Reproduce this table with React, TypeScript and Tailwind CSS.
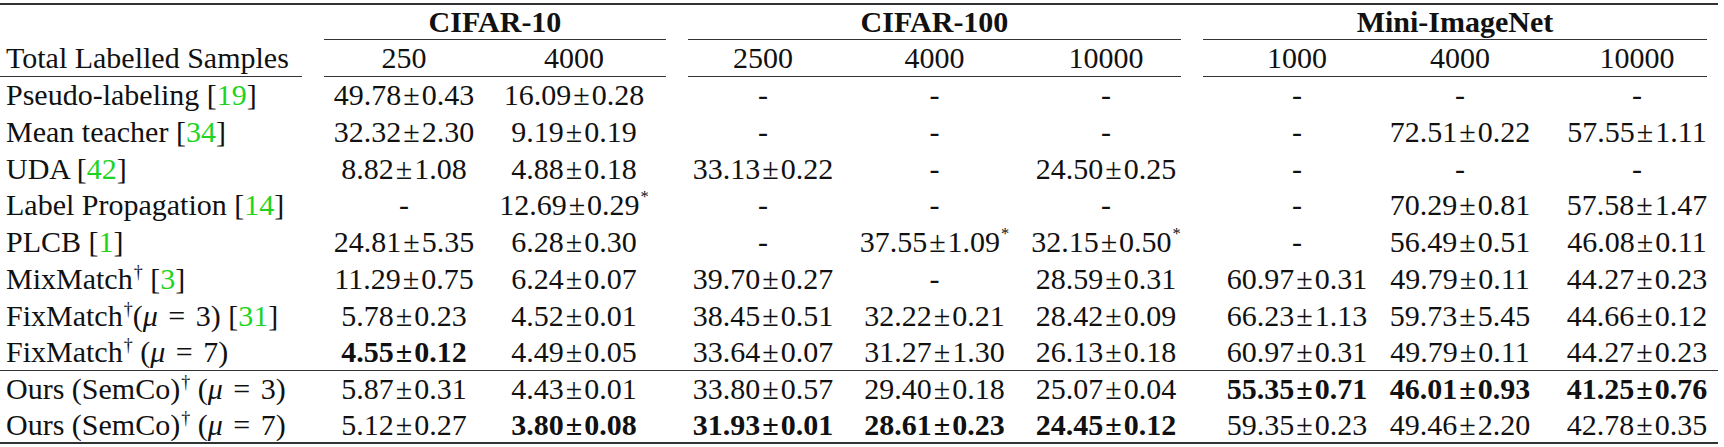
import type { ReactNode } from "react";

type Val = { v: string; b?: boolean; star?: boolean } | "-";

const cols = "grid grid-cols-[313px_182px_182px_172px_171px_172px_186px_164px_176px]";

function Ref({ n }: { n: string }) {
  return (
    <>
      {" "}[<span className="text-[#1ed41e]">{n}</span>]
    </>
  );
}

function Dag() {
  return <sup className="text-[0.6em] top-[-0.6em] ml-[1px]">†</sup>;
}

function Mu({ k }: { k: string }) {
  return (
    <>
      (<i>μ</i>
      <span className="inline-block w-[22px] text-center mx-[8px]">=</span>
      {k})
    </>
  );
}

const n = (v: string, extra?: { b?: boolean; star?: boolean }): Val => ({ v, ...extra });

const rows: { label: ReactNode; vals: Val[] }[] = [
  {
    label: <>Pseudo-labeling<Ref n="19" /></>,
    vals: [n("49.78±0.43"), n("16.09±0.28"), "-", "-", "-", "-", "-", "-"],
  },
  {
    label: <>Mean teacher<Ref n="34" /></>,
    vals: [n("32.32±2.30"), n("9.19±0.19"), "-", "-", "-", "-", n("72.51±0.22"), n("57.55±1.11")],
  },
  {
    label: <>UDA<Ref n="42" /></>,
    vals: [n("8.82±1.08"), n("4.88±0.18"), n("33.13±0.22"), "-", n("24.50±0.25"), "-", "-", "-"],
  },
  {
    label: <>Label Propagation<Ref n="14" /></>,
    vals: ["-", n("12.69±0.29", { star: true }), "-", "-", "-", "-", n("70.29±0.81"), n("57.58±1.47")],
  },
  {
    label: <>PLCB<Ref n="1" /></>,
    vals: [
      n("24.81±5.35"),
      n("6.28±0.30"),
      "-",
      n("37.55±1.09", { star: true }),
      n("32.15±0.50", { star: true }),
      "-",
      n("56.49±0.51"),
      n("46.08±0.11"),
    ],
  },
  {
    label: <>MixMatch<Dag /><Ref n="3" /></>,
    vals: [
      n("11.29±0.75"),
      n("6.24±0.07"),
      n("39.70±0.27"),
      "-",
      n("28.59±0.31"),
      n("60.97±0.31"),
      n("49.79±0.11"),
      n("44.27±0.23"),
    ],
  },
  {
    label: <>FixMatch<Dag /><Mu k="3" /><Ref n="31" /></>,
    vals: [
      n("5.78±0.23"),
      n("4.52±0.01"),
      n("38.45±0.51"),
      n("32.22±0.21"),
      n("28.42±0.09"),
      n("66.23±1.13"),
      n("59.73±5.45"),
      n("44.66±0.12"),
    ],
  },
  {
    label: <>FixMatch<Dag /> <Mu k="7" /></>,
    vals: [
      n("4.55±0.12", { b: true }),
      n("4.49±0.05"),
      n("33.64±0.07"),
      n("31.27±1.30"),
      n("26.13±0.18"),
      n("60.97±0.31"),
      n("49.79±0.11"),
      n("44.27±0.23"),
    ],
  },
  {
    label: <>Ours (SemCo)<Dag /> <Mu k="3" /></>,
    vals: [
      n("5.87±0.31"),
      n("4.43±0.01"),
      n("33.80±0.57"),
      n("29.40±0.18"),
      n("25.07±0.04"),
      n("55.35±0.71", { b: true }),
      n("46.01±0.93", { b: true }),
      n("41.25±0.76", { b: true }),
    ],
  },
  {
    label: <>Ours (SemCo)<Dag /> <Mu k="7" /></>,
    vals: [
      n("5.12±0.27"),
      n("3.80±0.08", { b: true }),
      n("31.93±0.01", { b: true }),
      n("28.61±0.23", { b: true }),
      n("24.45±0.12", { b: true }),
      n("59.35±0.23"),
      n("49.46±2.20"),
      n("42.78±0.35"),
    ],
  },
];

// padding that nudges the centre of a few columns
const pad = ["", "pr-[24px]", "", "", "", "pl-[24px]", "", "pl-[14px]"];

function ValCell({ val, i }: { val: Val; i: number }) {
  if (val === "-") return <div className={`flex items-center justify-center ${pad[i]}`}>-</div>;
  const [a, b] = val.v.split("±");
  return (
    <div className={`flex items-center justify-center ${pad[i]}`}>
      <span className={val.b ? "font-bold" : ""}>
        {a}
        <span className="mx-[2px]">±</span>
        {b}
        {val.star && <sup className="text-[0.55em] top-[-0.8em] ml-[1px] font-normal">*</sup>}
      </span>
    </div>
  );
}

const groups: [string[], string, string, number][] = [
  [["250", "4000"], "col-span-2", "grid-cols-2", 0],
  [["2500", "4000", "10000"], "col-span-3", "grid-cols-[172px_171px_172px]", 2],
  [["1000", "4000", "10000"], "col-span-3", "grid-cols-[186px_164px_176px]", 5],
];

export default function App() {
  return (
    <div className="bg-white w-[1724px] h-[447px] pt-[3px] text-[#111] text-[30px] leading-none font-['Liberation_Serif',serif]">
      <div className="w-[1718px] border-t-2 border-[#333]">
        {/* group headers */}
        <div className={`${cols} h-[35px]`}>
          <div />
          {[
            ["CIFAR-10", "col-span-2"],
            ["CIFAR-100", "col-span-3"],
            ["Mini-ImageNet", "col-span-3"],
          ].map(([t, span]) => (
            <div key={t} className={`${span} flex flex-col`}>
              <div className="flex-1 flex items-center justify-center font-bold">{t}</div>
              <div className="mx-[11px] border-b-[1.5px] border-[#333]" />
            </div>
          ))}
        </div>
        {/* column sizes */}
        <div className={`${cols} h-[36.75px]`}>
          <div className="flex flex-col">
            <div className="flex-1 flex items-center pl-[6px]">Total Labelled Samples</div>
            <div className="mr-[11px] border-b-[1.5px] border-[#333]" />
          </div>
          {groups.map(([labels, span, inner, first], gi) => (
            <div key={gi} className={`${span} flex flex-col`}>
              <div className={`flex-1 grid ${inner}`}>
                {labels.map((l, i) => (
                  <div key={i} className={`flex items-center justify-center ${pad[first + i]}`}>
                    {l}
                  </div>
                ))}
              </div>
              <div className="mx-[11px] border-b-[1.5px] border-[#333]" />
            </div>
          ))}
        </div>
        {rows.map((r, i) => (
          <div
            key={i}
            className={`${cols} h-[36.75px] ${i === 7 ? "border-b-[1.5px] border-[#333]" : ""} ${
              i === 9 ? "border-b-2 border-[#333]" : ""
            }`}
          >
            <div className="flex items-center pl-[6px] whitespace-nowrap">
              <span>{r.label}</span>
            </div>
            {r.vals.map((v, j) => (
              <ValCell key={j} val={v} i={j} />
            ))}
          </div>
        ))}
      </div>
    </div>
  );
}
